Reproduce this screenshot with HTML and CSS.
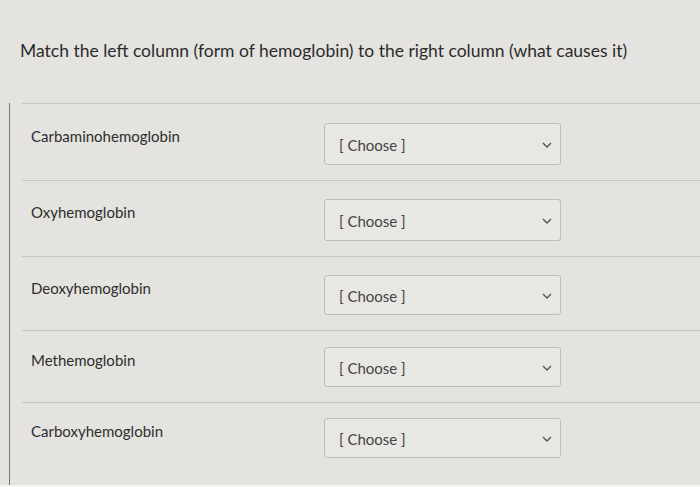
FILE: index.html
```html
<!DOCTYPE html>
<html>
<head>
<meta charset="utf-8">
<link rel="stylesheet" href="styles.css">
</head>
<body>
<div class="page">
  <h1 class="title">Match the left column (form of hemoglobin) to the right column (what causes it)</h1>
  <div class="panel">
    <div class="row">
      <div class="label">Carbaminohemoglobin</div>
      <div class="select"><span>[ Choose ]</span><svg class="chev" viewBox="0 0 10 6" width="10" height="6"><path d="M1 1 L5 5 L9 1" fill="none" stroke="#555" stroke-width="1.4"/></svg></div>
    </div>
    <div class="row">
      <div class="label">Oxyhemoglobin</div>
      <div class="select"><span>[ Choose ]</span><svg class="chev" viewBox="0 0 10 6" width="10" height="6"><path d="M1 1 L5 5 L9 1" fill="none" stroke="#555" stroke-width="1.4"/></svg></div>
    </div>
    <div class="row">
      <div class="label">Deoxyhemoglobin</div>
      <div class="select"><span>[ Choose ]</span><svg class="chev" viewBox="0 0 10 6" width="10" height="6"><path d="M1 1 L5 5 L9 1" fill="none" stroke="#555" stroke-width="1.4"/></svg></div>
    </div>
    <div class="row">
      <div class="label">Methemoglobin</div>
      <div class="select"><span>[ Choose ]</span><svg class="chev" viewBox="0 0 10 6" width="10" height="6"><path d="M1 1 L5 5 L9 1" fill="none" stroke="#555" stroke-width="1.4"/></svg></div>
    </div>
    <div class="row">
      <div class="label">Carboxyhemoglobin</div>
      <div class="select"><span>[ Choose ]</span><svg class="chev" viewBox="0 0 10 6" width="10" height="6"><path d="M1 1 L5 5 L9 1" fill="none" stroke="#555" stroke-width="1.4"/></svg></div>
    </div>
  </div>
</div>
</body>
</html>
```

FILE: styles.css
```css
html, body {
  margin: 0;
  padding: 0;
  height: 100%;
}
body {
  background: #e4e3df;
  font-family: Lato, "Open Sans", sans-serif;
  color: #2e2e2e;
  overflow: hidden;
}
.page {
  height: 485px;
  display: flex;
  flex-direction: column;
  border-bottom: 2px solid #f4f4f2;
}
.title {
  margin: 0;
  padding: 39px 0 0 20px;
  font-size: 17.5px;
  font-weight: 400;
  line-height: 24px;
  color: #2b2b2b;
  height: 64px;
}
.panel {
  flex: 1;
  margin-left: 9px;
  border-left: 1px solid #76766f;
  padding-left: 12px;
  display: flex;
  flex-direction: column;
}
.row {
  border-top: 1px solid #c6c6c2;
  display: grid;
  grid-template-columns: 302px 237px;
  padding: 18px 0 15px 0;
}
.row:nth-child(1) {
  padding-top: 19px;
}
.row:nth-child(4) {
  padding-top: 16px;
}
.row:nth-child(5) {
  padding-top: 15px;
}
.label {
  padding: 3px 0 0 9px;
  font-size: 15px;
  line-height: 20px;
  color: #2e2e2e;
}
.select {
  height: 40px;
  box-sizing: border-box;
  border: 1px solid #bdbdb9;
  border-radius: 3px;
  background: #e8e7e3;
  display: flex;
  align-items: center;
  justify-content: space-between;
  padding: 2px 8px 0 14px;
  font-size: 15px;
  color: #444;
}
.row:nth-child(1) .select,
.row:nth-child(2) .select {
  height: 42px;
}
.chev {
  display: block;
}
```
